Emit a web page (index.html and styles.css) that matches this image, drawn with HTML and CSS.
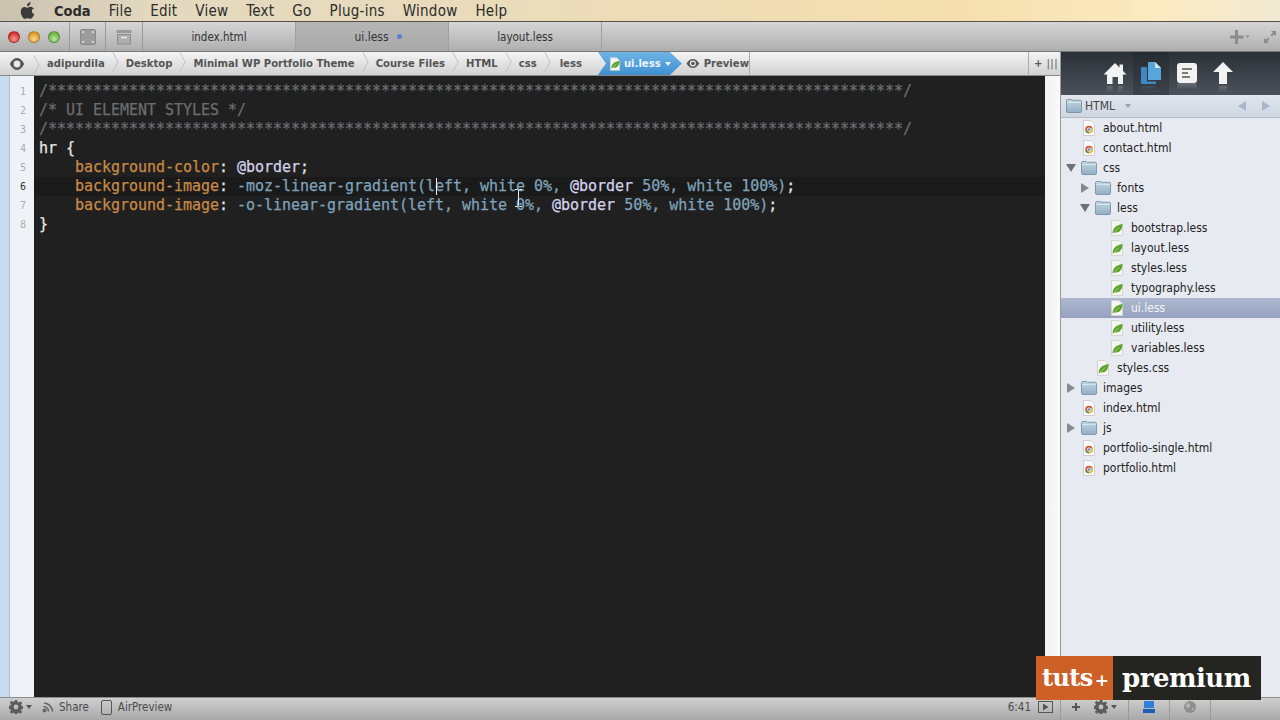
FILE: index.html
```html
<!DOCTYPE html>
<html lang="en">
<head>
<meta charset="utf-8">
<title>Coda - ui.less</title>
<link rel="stylesheet" href="styles.css">
</head>
<body>
<svg class="sprite" aria-hidden="true">
  <defs>
    <linearGradient id="fg" x1="0" y1="0" x2="0" y2="1"><stop offset="0" stop-color="#c3d6e2"/><stop offset="1" stop-color="#8fb0c6"/></linearGradient>
    <symbol id="folder" viewBox="0 0 16 14"><path d="M.5 3V1.600C.5 1 1 .5 1.600.5h3.600c.6 0 .8.8 1.400.8h7.800c.6 0 1.100.5 1.100 1.100v10c0 .6-.5 1.100-1.100 1.100H1.600c-.6 0-1.100-.5-1.100-1.100z" fill="url(#fg)" stroke="#6f8a9c" stroke-width=".8"/><path d="M1 3.400h14" stroke="#e4eef4" stroke-width=".8"/></symbol>
    <symbol id="chrome" viewBox="0 0 12 16"><path d="M.5.5h7.500l3.500 3.500v11.500H.5z" fill="#fbfbfb" stroke="#cfcfcf"/><circle cx="6" cy="9.500" r="3.800" fill="#d8533a"/><path d="M6 9.500 2.700 11.400A3.800 3.800 0 0 0 6 13.300z" fill="#4f9e43"/><path d="M6 9.500v3.800a3.800 3.800 0 0 0 3.300-5.700z" fill="#e8c334"/><circle cx="6" cy="9.500" r="1.700" fill="#5a8fd8" stroke="#fff" stroke-width=".7"/></symbol>
    <symbol id="leaf" viewBox="0 0 12 16"><path d="M.5.5h7.500l3.500 3.500v11.500H.5z" fill="#f6f6f2" stroke="#d4d4cc"/><path d="M1.500 13.500C2 8 5 5 11.500 4 11.500 9.500 8.500 13.300 3.600 12.400z" fill="#5da42d"/><path d="M1.500 14 8 7.500" stroke="#cfe6b6" stroke-width=".6"/></symbol>
    <symbol id="gear" viewBox="0 0 14 14"><path d="M5.800 0h2.400l.3 2 1.300.6 1.700-1.200 1.700 1.700-1.200 1.700.6 1.300 2 .3v2.400l-2 .3-.6 1.300 1.200 1.700-1.700 1.700-1.700-1.200-1.300.6-.3 2H5.800l-.3-2-1.300-.6-1.700 1.200-1.700-1.700 1.200-1.700-.6-1.300-2-.3V5.800l2-.3.6-1.300-1.200-1.700 1.700-1.700 1.700 1.200 1.300-.6zM7 4.600a2.400 2.400 0 1 0 0 4.800 2.400 2.400 0 0 0 0-4.800z" fill="#5c5c5c" fill-rule="evenodd"/></symbol>
  </defs>
</svg>

<header class="menubar">
  <svg class="apple" viewBox="0 0 16 18"><path d="M11.300 0c.1 1.200-.3 2.300-1 3.100-.7.8-1.700 1.400-2.800 1.300-.1-1.100.4-2.300 1.100-3C9.300.6 10.400.1 11.300 0zM14.700 6.200c-1.500.9-2 2-2 3.300 0 1.700 1 2.900 2.500 3.500-.8 2.200-2.400 4.900-4.100 4.900-1 0-1.500-.6-2.800-.6s-1.900.6-2.800.6C3.300 17.900.8 13.700.8 10.200c0-3.200 2-5 4-5 1.200 0 2.200.8 3 .8.700 0 1.900-.9 3.300-.9 1.100 0 2.600.4 3.600 2.100z" fill="#3a3a3a"/></svg>
  <span class="menu-app">Coda</span>
  <span class="menu-item">File</span>
  <span class="menu-item">Edit</span>
  <span class="menu-item">View</span>
  <span class="menu-item">Text</span>
  <span class="menu-item">Go</span>
  <span class="menu-item">Plug-ins</span>
  <span class="menu-item">Window</span>
  <span class="menu-item">Help</span>
</header>

<section class="titlebar">
  <div class="lights"><i class="light red"></i><i class="light amber"></i><i class="light green"></i></div>
  <div class="tool-btn"><svg width="16" height="16" viewBox="0 0 16 16"><rect x=".5" y=".5" width="15" height="15" rx="1.500" fill="#9c9c9c" stroke="#8a8a8a"/><path d="M2 2h2v2H2zM12 2h2v2h-2zM2 12h2v2H2zM12 12h2v2h-2z" fill="#d6d6d6"/></svg></div>
  <div class="tool-btn"><svg width="16" height="16" viewBox="0 0 16 16"><path d="M.5 1h15v3H.5z" fill="#9a9a9a"/><path d="M1.500 5.500h13V15h-13z" fill="#adadad" stroke="#8c8c8c"/><path d="M5 8.500h6" stroke="#e8e8e8" stroke-width="1.500"/></svg></div>
  <div class="tab">index.html</div>
  <div class="tab tab-active">ui.less <i class="tab-dot"></i></div>
  <div class="tab">layout.less</div>
  <div class="title-right">
    <svg width="20" height="14" viewBox="0 0 20 14"><path d="M5 0h3v5.500h5.500v3H8V14H5V8.500H0v-3h5z" fill="#8b8b8b"/><path d="M15.500 5.500h4l-2 2.500z" fill="#8b8b8b"/></svg>
    <svg width="12" height="12" viewBox="0 0 12 12"><path d="M7 0h5v5l-1.800-1.800L8 5.400 6.600 4 8.800 1.800zM0 12V7l1.800 1.800L4 6.600 5.400 8 3.200 10.200 5 12z" fill="#8b8b8b"/></svg>
  </div>
</section>

<div class="workspace">
  <main class="main">
    <nav class="crumbs">
      <span class="crumb-root"><svg width="16" height="14" viewBox="0 0 16 14"><path d="M.8 7C3 2.800 5.500 1 8 1s5 1.800 7.200 6C13 11.200 10.500 13 8 13S3 11.200.8 7z" fill="#555"/><circle cx="8" cy="7" r="3.400" fill="#e8e8e8"/></svg></span>
      <span class="crumb">adipurdila</span>
      <span class="crumb">Desktop</span>
      <span class="crumb">Minimal WP Portfolio Theme</span>
      <span class="crumb">Course Files</span>
      <span class="crumb">HTML</span>
      <span class="crumb">css</span>
      <span class="crumb crumb-last">less</span>
      <span class="crumb-current"><svg class="file-sm" width="10" height="14"><use href="#leaf"/></svg>ui.less <i class="caret-down"></i></span>
      <span class="crumb-preview"><svg width="15" height="11" viewBox="0 0 15 11"><path d="M.5 5.500C2.500 2 5 .5 7.500.5s5 1.500 7 5c-2 3.500-4.500 5-7 5s-5-1.500-7-5z" fill="#5a5a5a"/><circle cx="7.500" cy="5.500" r="3.300" fill="#eee"/><circle cx="7.500" cy="5.500" r="2" fill="#555"/></svg>Preview</span>
      <span class="crumb-tools"><b>+</b><span class="bars">|||</span></span>
    </nav>
    <div class="editor">
      <div class="strip"></div>
      <ol class="gutter">
        <li>1</li><li>2</li><li>3</li><li>4</li><li>5</li><li class="gutter-cur">6</li><li>7</li><li>8</li>
      </ol>
      <div class="code">
        <div class="line c">/***********************************************************************************************/</div>
        <div class="line c">/* UI ELEMENT STYLES */</div>
        <div class="line c">/***********************************************************************************************/</div>
        <div class="line p">hr {</div>
        <div class="line p">    <span class="k">background-color</span>: <span class="a">@border</span>;</div>
        <div class="line p cur">    <span class="k">background-image</span>: <span class="v">-moz-linear-gradient(left, white 0%,</span> <span class="a">@border</span> <span class="v">50%, white 100%)</span>;<i class="text-caret"></i></div>
        <div class="line p">    <span class="k">background-image</span>: <span class="v">-o-linear-gradient(left, white 0%,</span> <span class="a">@border</span> <span class="v">50%, white 100%)</span>;</div>
        <div class="line p">}</div>
        <svg class="ibeam" width="9" height="18" viewBox="0 0 9 18"><path d="M1 .5h2.500l1 1 1-1H8M4.500 1.500v15M1 17.500h2.500l1-1 1 1H8" fill="none" stroke="#eee"/></svg>
      </div>
      <div class="scroll"></div>
    </div>
  </main>

  <aside class="side">
    <div class="side-tools">
      <span class="side-tool"><svg width="24" height="24" viewBox="0 0 24 24"><path d="M12 2 16.500 6.500V3.500h3.500V10l3.500 3.500H20V23h-5v-7H9.500v7H4V13.500H.5z" fill="#f2f2f2"/></svg></span>
      <span class="side-tool side-tool-on"><svg width="22" height="24" viewBox="0 0 22 24"><path d="M8 1h7l6 6v12H8z" fill="#5aa4dc"/><path d="M1 6h6v14.500h9V23H1z" fill="#3f88c4"/><path d="M15 1v6h6z" fill="#cfe4f5"/></svg></span>
      <span class="side-tool"><svg width="20" height="20" viewBox="0 0 20 20"><rect width="20" height="20" rx="3" fill="#f2f2f2"/><path d="M5 6h10M5 10h6M5 14h8" stroke="#555" stroke-width="1.500"/></svg></span>
      <span class="side-tool"><svg width="20" height="24" viewBox="0 0 20 24"><path d="M10 1 20 11h-6v12H6V11H0z" fill="#f2f2f2"/></svg></span>
    </div>
    <div class="pathbar">
      <svg class="pathfolder" width="16" height="14"><use href="#folder"/></svg>
      <span class="path-name">HTML</span>
      <i class="path-down"></i>
      <span class="path-nav"><i class="nav-left"></i><i class="nav-right"></i></span>
    </div>
    <ul class="tree">
      <li class="row l0"><i class="tw"></i><span class="ic"><svg width="12" height="16"><use href="#chrome"/></svg></span>about.html</li>
      <li class="row l0"><i class="tw"></i><span class="ic"><svg width="12" height="16"><use href="#chrome"/></svg></span>contact.html</li>
      <li class="row l0"><i class="tw open"></i><span class="ic"><svg width="16" height="14"><use href="#folder"/></svg></span>css</li>
      <li class="row l1"><i class="tw closed"></i><span class="ic"><svg width="16" height="14"><use href="#folder"/></svg></span>fonts</li>
      <li class="row l1"><i class="tw open"></i><span class="ic"><svg width="16" height="14"><use href="#folder"/></svg></span>less</li>
      <li class="row l2"><i class="tw"></i><span class="ic"><svg width="12" height="16"><use href="#leaf"/></svg></span>bootstrap.less</li>
      <li class="row l2"><i class="tw"></i><span class="ic"><svg width="12" height="16"><use href="#leaf"/></svg></span>layout.less</li>
      <li class="row l2"><i class="tw"></i><span class="ic"><svg width="12" height="16"><use href="#leaf"/></svg></span>styles.less</li>
      <li class="row l2"><i class="tw"></i><span class="ic"><svg width="12" height="16"><use href="#leaf"/></svg></span>typography.less</li>
      <li class="row l2 selected"><i class="tw"></i><span class="ic"><svg width="12" height="16"><use href="#leaf"/></svg></span>ui.less</li>
      <li class="row l2"><i class="tw"></i><span class="ic"><svg width="12" height="16"><use href="#leaf"/></svg></span>utility.less</li>
      <li class="row l2"><i class="tw"></i><span class="ic"><svg width="12" height="16"><use href="#leaf"/></svg></span>variables.less</li>
      <li class="row l1"><i class="tw"></i><span class="ic"><svg width="12" height="16"><use href="#leaf"/></svg></span>styles.css</li>
      <li class="row l0"><i class="tw closed"></i><span class="ic"><svg width="16" height="14"><use href="#folder"/></svg></span>images</li>
      <li class="row l0"><i class="tw"></i><span class="ic"><svg width="12" height="16"><use href="#chrome"/></svg></span>index.html</li>
      <li class="row l0"><i class="tw closed"></i><span class="ic"><svg width="16" height="14"><use href="#folder"/></svg></span>js</li>
      <li class="row l0"><i class="tw"></i><span class="ic"><svg width="12" height="16"><use href="#chrome"/></svg></span>portfolio-single.html</li>
      <li class="row l0"><i class="tw"></i><span class="ic"><svg width="12" height="16"><use href="#chrome"/></svg></span>portfolio.html</li>
    </ul>
  </aside>
</div>

<footer class="status">
  <svg class="st-gear" width="14" height="14"><use href="#gear"/></svg><i class="st-down"></i>
  <svg class="st-share" width="12" height="12" viewBox="0 0 12 12"><circle cx="2.500" cy="9.500" r="2" fill="#666"/><path d="M1.500 5.500a5 5 0 0 1 5 5M2 2a9 9 0 0 1 8.500 8.500" fill="none" stroke="#666" stroke-width="1.600"/></svg>
  <span class="st-label">Share</span>
  <svg class="st-air" width="11" height="15" viewBox="0 0 11 15"><rect x=".5" y=".5" width="10" height="14" rx="1.500" fill="none" stroke="#555"/></svg>
  <span class="st-label">AirPreview</span>
  <div class="st-right">
    <span class="st-time">6:41</span>
    <svg class="st-play" width="15" height="12" viewBox="0 0 15 12"><rect x=".5" y=".5" width="14" height="11" fill="none" stroke="#555"/><path d="M5 2.500 10.500 6 5 9.500z" fill="#555"/></svg>
    <span class="st-cell st-plus"><svg width="8" height="8" viewBox="0 0 8 8"><path d="M3 0h2v3h3v2H5v3H3V5H0V3h3z" fill="#555"/></svg><svg width="14" height="14"><use href="#gear"/></svg><i class="st-down"></i></span>
    <span class="st-cell st-drive"><svg width="12" height="12" viewBox="0 0 12 12"><path d="M1 0h10v7H1z" fill="#2f7fdc"/><path d="M0 8h12v4H0z" fill="#1b5fb4"/></svg></span>
    <span class="st-cell st-globe"><svg width="12" height="12" viewBox="0 0 12 12"><circle cx="6" cy="6" r="6" fill="#8f8f8f"/><path d="M3 2c2 0 3 1 3 3s-3 2-4 1zM8 7l2 0-2 3z" fill="#b5b5b5"/></svg></span>
  </div>
</footer>

<div class="badge"><span class="badge-tuts">tuts<span class="badge-plus">+</span></span><span class="badge-premium">premium</span></div>
</body>
</html>
```

FILE: styles.css
```css
* { box-sizing: border-box; }
html, body { margin: 0; padding: 0; }
body {
  width: 1280px;
  height: 720px;
  overflow: hidden;
  display: flex;
  flex-direction: column;
  font-family: "DejaVu Sans", sans-serif;
  font-stretch: condensed;
  color: #222;
  background: #222;
}
.sprite { position: absolute; width: 0; height: 0; }
i { display: block; font-style: normal; }
ol, ul { list-style: none; margin: 0; padding: 0; }

/* menu bar */
.menubar {
  height: 22px;
  flex: none;
  display: flex;
  align-items: center;
  padding-left: 20px;
  background: linear-gradient(90deg, #c9c2b0 0, #e4d9bf 12%, #ecdcb8 50%, #f5dfae 75%, #fbeac0 90%, #f1e9d2 100%);
  border-bottom: 1px solid #55504a;
  font-size: 15px;
  color: #2b2b2b;
}
.apple { width: 15px; height: 17px; margin-right: 19px; }
.menu-app { font-weight: 700; font-size: 14.5px; margin-right: 18px; }
.menu-item { margin-right: 18px; letter-spacing: .25px; }

/* title bar with tabs */
.titlebar {
  height: 30px;
  flex: none;
  display: flex;
  align-items: stretch;
  background: linear-gradient(#d6d6d6, #aeaeae);
  border-bottom: 1px solid #777;
}
.lights {
  width: 70px;
  display: flex;
  align-items: center;
  gap: 8px;
  padding-left: 8px;
  border-right: 1px solid #999;
}
.light { width: 12px; height: 12px; border-radius: 50%; border: 1px solid rgba(0,0,0,.25); }
.red { background: radial-gradient(circle at 50% 70%, #f59a92, #d3302a 70%); }
.amber { background: radial-gradient(circle at 50% 70%, #fbd98a, #e0962a 70%); }
.green { background: radial-gradient(circle at 50% 70%, #bfe59a, #6cb344 70%); }
.tool-btn {
  width: 36px;
  display: flex;
  align-items: center;
  justify-content: center;
  border-right: 1px solid #999;
}
.tool-btn + .tool-btn { width: 37px; }
.tab {
  width: 153px;
  display: flex;
  align-items: center;
  justify-content: center;
  gap: 7px;
  font-size: 11.5px;
  color: #333;
  border-right: 1px solid #a0a0a0;
}
.tab-active { background: linear-gradient(#b6b6b6, #a8a8a8); font-size: 12px; padding-left: 12px; gap: 8px; }
.tab-dot { width: 5px; height: 5px; border-radius: 50%; background: #5a7fd0; }
.title-right {
  margin-left: auto;
  display: flex;
  align-items: center;
  gap: 14px;
  padding-right: 4px;
}

/* workspace */
.workspace { flex: 1; min-height: 0; display: flex; }
.main { width: 1060px; display: flex; flex-direction: column; }

/* breadcrumb */
.crumbs {
  height: 24px;
  flex: none;
  display: flex;
  align-items: center;
  background: linear-gradient(#f4f4f4, #d2d2d2);
  border-bottom: 1px solid #8a8a8a;
  font-size: 11.2px;
  font-weight: 700;
  color: #555;
}
.crumb-root { position: relative; width: 47px; height: 14px; padding-left: 9px; display: flex; align-items: center; }
.crumb { position: relative; margin-right: 21px; white-space: nowrap; }
.crumb::after, .crumb-root::after {
  content: "";
  position: absolute;
  top: -2px;
  right: -15px;
  width: 13px;
  height: 13px;
  border-top: 1px solid #bbb;
  border-right: 1px solid #bbb;
  transform: scaleX(.55) rotate(45deg);
}
.crumb-root::after { top: 1px; right: 6px; }
.crumb-last { margin-left: 2px; margin-right: 16px; }
.crumb-last::after { display: none; }
.crumb-current {
  width: 84px;
  height: 23px;
  display: flex;
  flex: none;
  align-items: center;
  gap: 4px;
  padding-left: 12px;
  color: #eaf4fc;
  background: linear-gradient(#6fb4e6, #3f8fd0);
  clip-path: polygon(0 0, 72px 0, 84px 50%, 72px 100%, 0 100%, 8px 50%);
}
.caret-down, .st-down, .path-down {
  width: 0; height: 0;
  border-left: 3px solid transparent;
  border-right: 3px solid transparent;
  border-top: 4px solid currentColor;
}
.crumb-preview {
  display: flex;
  align-items: center;
  gap: 4px;
  height: 23px;
  width: 68px;
  padding-left: 4px;
  border-right: 1px solid #aaa;
}
.crumb-tools {
  margin-left: auto;
  width: 32px;
  height: 23px;
  display: flex;
  align-items: center;
  gap: 4px;
  padding-left: 5px;
  border-left: 1px solid #aaa;
  color: #555;
}
.bars { font-weight: 400; letter-spacing: .5px; }

/* editor */
.editor { flex: 1; min-height: 0; display: flex; }
.strip { width: 10px; background: #c8dcef; border-right: 1px solid #aebccb; }
.gutter {
  width: 24px;
  padding-top: 6px;
  background: #eff2f6;
  font-family: "DejaVu Sans Mono", monospace;
  font-stretch: normal;
  font-size: 10px;
  color: #a9adb2;
  text-align: right;
  padding-right: 8px;
}
.gutter li { height: 19px; line-height: 19px; }
.gutter .gutter-cur { color: #333; }
.code {
  position: relative;
  flex: 1;
  padding-top: 6px;
  background: #202020;
  font-family: "DejaVu Sans Mono", monospace;
  font-stretch: normal;
  font-size: 15px;
  letter-spacing: -.03px;
  -webkit-text-stroke: .25px;
}
.line { height: 19px; line-height: 19px; padding-left: 5px; white-space: pre; }
.c { color: #6a6d71; }
.p { color: #e6e6e6; }
.k { color: #c88a45; }
.v { color: #7fa3bb; }
.a { color: #d4d2ec; }
.cur { position: relative; background: #1a1a1a; }
.text-caret {
  position: absolute;
  left: 402px;
  top: 1px;
  width: 1px;
  height: 17px;
  background: #eee;
}
.ibeam { position: absolute; left: 480px; top: 113px; }
.scroll { width: 15px; background: linear-gradient(90deg, #f1f1f1, #fafafa); }

/* sidebar */
.side {
  flex: 1;
  display: flex;
  flex-direction: column;
  background: #e7eaf0;
  border-left: 1px solid #9a9a9a;
}
.side-tools {
  height: 43px;
  flex: none;
  display: flex;
  padding-left: 36px;
  background: linear-gradient(#2b3037, #4b525a);
}
.side-tool {
  width: 36px;
  display: flex;
  align-items: center;
  justify-content: center;
  padding-bottom: 2px;
}
.side-tool svg { -webkit-box-reflect: below 0 linear-gradient(transparent 65%, rgba(255,255,255,.22)); }
.side-tool-on { background: rgba(30,34,40,.3); }
.pathbar {
  height: 23px;
  flex: none;
  display: flex;
  align-items: center;
  padding-left: 5px;
  background: linear-gradient(#e1e6ee, #cfd6e2);
  border-bottom: 1px solid #b3bac6;
  font-size: 12px;
  color: #444;
}
.pathfolder { margin-right: 3px; }
.path-name { margin-right: 10px; }
.path-down { color: #9aa2ae; }
.path-nav { margin-left: auto; display: flex; gap: 16px; padding-right: 10px; }
.nav-left, .nav-right { width: 0; height: 0; border-top: 5px solid transparent; border-bottom: 5px solid transparent; }
.nav-left { border-right: 8px solid #a7b6cc; }
.nav-right { border-left: 8px solid #a7b6cc; }

.tree { padding-top: 0; font-size: 12px; color: #222; }
.row { height: 20px; display: flex; align-items: center; white-space: nowrap; }
.l0 { padding-left: 3px; }
.l1 { padding-left: 17px; }
.l2 { padding-left: 31px; }
.tw { width: 14px; flex: none; }
.open::before, .closed::before { content: ""; display: block; width: 0; height: 0; margin-left: 2px; }
.open::before { border-left: 5px solid transparent; border-right: 5px solid transparent; border-top: 8px solid #6d7178; }
.closed::before { margin-left: 3px; border-top: 5px solid transparent; border-bottom: 5px solid transparent; border-left: 8px solid #85898f; }
.ic { width: 22px; margin-right: 3px; flex: none; display: flex; align-items: center; justify-content: center; }
.selected { background: linear-gradient(#adb8cf, #95a2bf); color: #f4f6fa; }

/* status bar */
.status {
  height: 23px;
  flex: none;
  display: flex;
  align-items: center;
  padding-left: 9px;
  background: linear-gradient(#cfcfcf, #a8a8a8);
  border-top: 1px solid #8c8c8c;
  font-size: 11.5px;
  color: #4a4a4a;
}
.status > svg, .status > i, .st-label, .st-time, .st-play, .st-cell > * { margin-bottom: 4px; }
.status .st-down { color: #555; margin-left: 3px; }
.status .st-plus .st-down { margin-left: -11px; }
.st-share { margin-left: 10px; margin-right: 5px; }
.st-label { margin-right: 12px; }
.st-air { margin-right: 6px; }
.st-right { margin-left: auto; height: 100%; display: flex; align-items: center; }
.st-time { margin-right: 7px; }
.st-play { margin-right: 7px; }
.st-cell {
  height: 100%;
  display: flex;
  align-items: center;
  justify-content: center;
  border-left: 1px solid #9a9a9a;
}
.st-plus { width: 68px; gap: 14px; justify-content: flex-start; padding-left: 11px; }
.st-drive { width: 41px; }
.st-globe { width: 42px; border-right: 1px solid #9a9a9a; margin-right: 69px; }

/* watermark */
.badge {
  position: absolute;
  left: 1036px;
  top: 656px;
  width: 225px;
  height: 44px;
  display: flex;
  background: #242421;
  font-family: "DejaVu Serif", serif;
  font-stretch: normal;
  font-weight: 700;
  color: #fff;
}
.badge-tuts {
  width: 77px;
  padding-left: 6px;
  background: #cd6026;
  font-size: 24px;
  line-height: 44px;
  letter-spacing: -.6px;
  white-space: nowrap;
}
.badge-plus { font-size: 17px; margin-left: 2px; }
.badge-premium {
  padding-left: 9px;
  font-size: 26px;
  line-height: 44px;
  letter-spacing: -.5px;
}
```
